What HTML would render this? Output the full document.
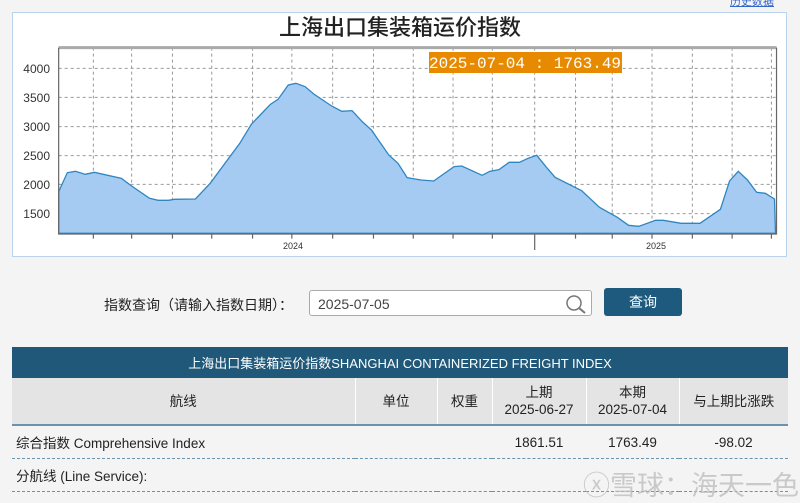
<!DOCTYPE html>
<html><head><meta charset="utf-8"><style>
body{margin:0;width:800px;height:503px;overflow:hidden;background:#f4f4f4;font-family:"Liberation Sans","Noto Sans CJK SC",sans-serif;position:relative}
.panel{position:absolute;left:12px;top:12px;width:775px;height:245px;background:#fff;border:1px solid #b9d4ea;box-sizing:border-box}
.title{position:absolute;left:0;width:800px;top:10px;text-align:center;font-size:22px;color:#222;font-family:"Noto Sans CJK SC",sans-serif;font-weight:500}
.lbl{position:absolute;left:104px;top:295px;font-size:14px;color:#222}
.inp{position:absolute;left:309px;top:290px;width:283px;height:26px;background:#fff;border:1px solid #aaa;border-radius:3px;box-sizing:border-box;font-size:14px;color:#444;padding:5px 8px}
.btn{position:absolute;left:604px;top:288px;width:78px;height:28px;background:#1d5a7e;border-radius:3px;color:#fff;font-size:14px;text-align:center;line-height:28px}
table{position:absolute;left:12px;top:347px;width:776px;border-collapse:collapse;font-size:13.5px;color:#222;table-layout:fixed}
th.top{background:#1f5878;color:#fff;font-weight:normal;height:31px;font-size:13px;padding:0}
tr.h td{background:#e4e4e4;height:46px;padding:0;text-align:center;border-right:1px solid #fff;line-height:17px;border-bottom:2px solid #6a93b0}
tr.r td{height:32px;padding:0;border-bottom:1px dashed #6a93b0}
.wm{position:absolute;left:583px;top:464px;font-size:27px;color:rgba(190,190,190,.8);white-space:nowrap}
</style></head><body>
<div style="position:absolute;left:730px;top:-7px;font-size:11px;color:#36c;text-decoration:underline">历史数据</div>
<div class="panel"></div>
<div class="title">上海出口集装箱运价指数</div>
<svg style="position:absolute;left:0;top:0" width="800" height="260">
<g transform="scale(0.5102,0.3333)">
<g stroke="#999" stroke-dasharray="3,3" vector-effect="non-scaling-stroke">
<path vector-effect="non-scaling-stroke" d="M183 143V700M258 143V700M338 143V700M415 143V700M495 143V700M572 143V700M652 143V700M732 143V700M810 143V700M888 143V700M965 143V700M1048 143V700M1128 143V700M1200 143V700M1278 143V700M1357 143V700M1435 143V700M1512 143V700M115 205H1520M115 292H1520M115 380H1520M115 467H1520M115 553H1520M115 641H1520"/>
</g>
<path fill="#a6cbf3" stroke="#2e86c1" stroke-width="1.3" vector-effect="non-scaling-stroke" d="M115 700L115 575L132 518L148 514L167 523L185 517L238 535L258 558L293 595L310 601L330 601L342 598L383 597L412 550L470 430L493 372L510 345L530 313L545 298L565 255L580 250L598 260L615 282L650 318L670 334L690 332L710 365L728 390L762 465L780 490L798 533L825 540L850 543L890 500L905 498L945 526L960 514L978 509L998 487L1018 487L1035 475L1052 466L1070 500L1088 532L1140 572L1175 622L1210 652L1232 676L1252 679L1285 661L1300 661L1335 670L1372 670L1412 628L1430 543L1447 514L1465 540L1483 577L1500 580L1518 597L1520 700Z"/>
<path stroke="#aaa" stroke-width="3" vector-effect="non-scaling-stroke" d="M115 143H1522"/>
<path stroke="#666" stroke-width="1.2" fill="none" vector-effect="non-scaling-stroke" d="M115 143V702H1522V143M183 702V716M258 702V716M338 702V716M415 702V716M495 702V716M572 702V716M652 702V716M732 702V716M810 702V716M888 702V716M965 702V716M1048 702V750M1128 702V716M1200 702V716M1278 702V716M1357 702V716M1435 702V716M1512 702V716"/>
</g>
<rect x="429" y="52" width="193" height="21" fill="#e88a00"/>
<text x="525" y="68" fill="#fff" font-size="16" text-anchor="middle" font-family="Liberation Mono,monospace">2025-07-04 : 1763.49</text>
<g font-size="12" fill="#333" text-anchor="end">
<text x="50" y="73">4000</text><text x="50" y="102">3500</text><text x="50" y="131">3000</text><text x="50" y="160">2500</text><text x="50" y="189">2000</text><text x="50" y="218">1500</text></g>
<g font-size="9" fill="#333" text-anchor="middle"><text x="293" y="249">2024</text><text x="656" y="249">2025</text></g>
</svg>
<div class="lbl">指数查询（请输入指数日期）：</div>
<div class="inp">2025-07-05
<svg style="position:absolute;right:4px;top:3px" width="22" height="20"><circle cx="9" cy="9" r="7" fill="none" stroke="#777" stroke-width="1.5"/><path d="M14 14L20 19" stroke="#777" stroke-width="2"/></svg></div>
<div class="btn">查询</div>
<table>
<colgroup><col style="width:343px"><col style="width:82px"><col style="width:55px"><col style="width:94px"><col style="width:93px"><col style="width:109px"></colgroup>
<tr><th class="top" colspan="6">上海出口集装箱运价指数SHANGHAI CONTAINERIZED FREIGHT INDEX</th></tr>
<tr class="h"><td>航线</td><td>单位</td><td>权重</td><td>上期<br>2025-06-27</td><td>本期<br>2025-07-04</td><td style="border-right:0">与上期比涨跌</td></tr>
<tr class="r"><td style="padding-left:4px">综合指数 Comprehensive Index</td><td></td><td></td><td style="text-align:center">1861.51</td><td style="text-align:center">1763.49</td><td style="text-align:center">-98.02</td></tr>
<tr class="r"><td style="padding-left:4px">分航线 (Line Service):</td><td></td><td></td><td></td><td></td><td></td></tr>
</table>
<div class="wm">ⓧ雪球：海天一色</div>
</body></html>
